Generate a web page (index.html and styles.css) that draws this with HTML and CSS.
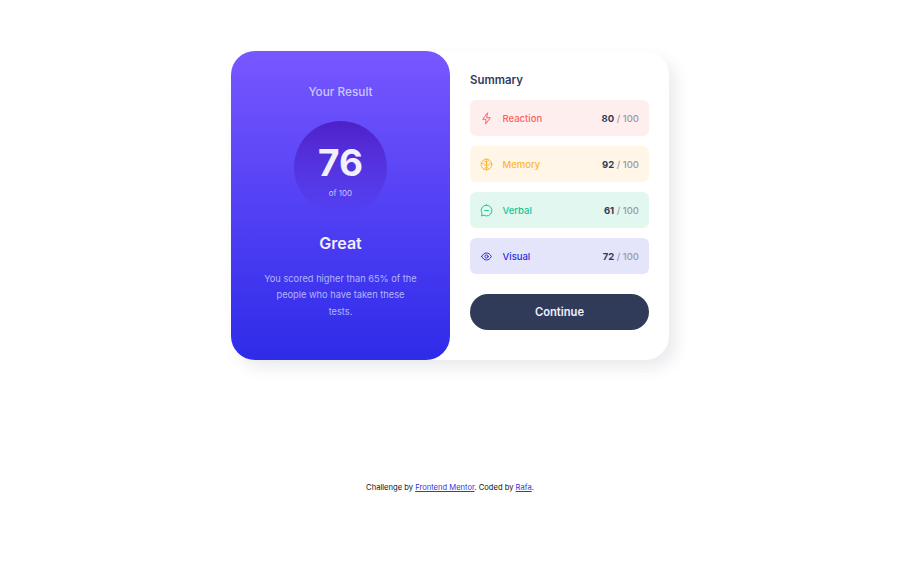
FILE: index.html
```html
<!DOCTYPE html>
<html lang="en">
<head>
<meta charset="utf-8">
<title>Results summary</title>
<link rel="stylesheet" href="styles.css">
</head>
<body>
<main class="card">
  <section class="result">
    <h1 class="result-title">Your Result</h1>
    <div class="score">
      <span class="score-value">76</span>
      <span class="score-total">of 100</span>
    </div>
    <h2 class="grade">Great</h2>
    <p class="blurb">You scored higher than 65% of the people who have taken these<br>tests.</p>
  </section>
  <section class="summary">
    <h2 class="summary-title">Summary</h2>
    <ul class="rows">
      <li class="row row-reaction">
        <svg class="icon" viewBox="0 0 24 24" fill="none" stroke="currentColor" stroke-width="1.8" stroke-linejoin="round" stroke-linecap="round"><path d="M13.500 2 5 13.500h6L10.500 22 19 10.500h-6z"/></svg>
        <span class="label">Reaction</span>
        <span class="value"><b>80</b> / 100</span>
      </li>
      <li class="row row-memory">
        <svg class="icon" viewBox="0 0 24 24" fill="none" stroke="currentColor" stroke-width="1.8" stroke-linejoin="round" stroke-linecap="round"><circle cx="12" cy="12" r="10"/><path d="M12 2v20M12 8c-2 0-3-1-3.500-2.500M12 8c2 0 3-1 3.500-2.500M12 13H7.500M12 13h4.500M2.500 10H6M21.500 10H18M12 17c-2 0-3 1-3.500 3M12 17c2 0 3 1 3.500 3"/></svg>
        <span class="label">Memory</span>
        <span class="value"><b>92</b> / 100</span>
      </li>
      <li class="row row-verbal">
        <svg class="icon" viewBox="0 0 24 24" fill="none" stroke="currentColor" stroke-width="1.8" stroke-linejoin="round" stroke-linecap="round"><path d="M12 2a10 10 0 1 1-4.800 18.800L2.500 22l1.300-4.500A10 10 0 0 1 12 2z"/><path d="M8.500 12h7"/></svg>
        <span class="label">Verbal</span>
        <span class="value"><b>61</b> / 100</span>
      </li>
      <li class="row row-visual">
        <svg class="icon" viewBox="0 0 24 24" fill="none" stroke="currentColor" stroke-width="1.8" stroke-linejoin="round" stroke-linecap="round"><path d="M3 12c2.300-4 5.300-6.500 9-6.500s6.700 2.500 9 6.500c-2.300 4-5.300 6.500-9 6.500S5.300 16 3 12z"/><circle cx="12" cy="12" r="3"/></svg>
        <span class="label">Visual</span>
        <span class="value"><b>72</b> / 100</span>
      </li>
    </ul>
    <button class="continue" type="button">Continue</button>
  </section>
</main>
<footer class="attribution">Challenge by <a href="#">Frontend Mentor</a>. Coded by <a href="#">Rafa</a>.</footer>
</body>
</html>
```
FILE: styles.css
```css
* { box-sizing: border-box; }
html, body { margin: 0; padding: 0; }
body {
  width: 900px;
  height: 563px;
  overflow: hidden;
  background: #fff;
  font-family: "Inter", "Liberation Sans", sans-serif;
  display: flex;
  flex-direction: column;
  align-items: center;
}
.card {
  display: flex;
  width: 438px;
  height: 309px;
  margin-top: 51px;
  background: #fff;
  border-radius: 24px;
  box-shadow: 7px 8px 15px rgba(48, 60, 89, 0.1);
}
.result {
  width: 219px;
  border-radius: 24px;
  background: linear-gradient(180deg, #7857ff 0%, #2e2be9 100%);
  display: flex;
  flex-direction: column;
  align-items: center;
  padding-top: 33px;
  color: #fff;
}
.result-title {
  margin: 0;
  font-size: 11.800px;
  line-height: 16px;
  font-weight: 500;
  color: #c8c7ff;
}
.score {
  width: 93px;
  height: 93px;
  margin-top: 21px;
  border-radius: 50%;
  background: linear-gradient(180deg, #4d21c9 0%, rgba(37, 33, 201, 0) 100%);
  display: flex;
  flex-direction: column;
  align-items: center;
  padding-top: 20px;
}
.score-value {
  font-size: 37px;
  line-height: 44px;
  font-weight: 700;
  color: #f0f0ff;
}
.score-total {
  font-size: 8px;
  line-height: 12px;
  margin-top: 2px;
  color: #c8c7ff;
}
.grade {
  margin: 20px 0 0;
  font-size: 16px;
  line-height: 18px;
  font-weight: 600;
  color: #f0f0ff;
}
.blurb {
  width: 156px;
  margin: 19px 0 0;
  font-size: 9.250px;
  line-height: 16.300px;
  text-align: center;
  color: #b5b4ff;
}
.summary {
  width: 219px;
  padding: 21px 20px 0 20px;
  display: flex;
  flex-direction: column;
}
.summary-title {
  margin: 0;
  font-size: 11.400px;
  line-height: 16px;
  font-weight: 600;
  color: #303b5a;
}
.rows {
  list-style: none;
  margin: 12px 0 0;
  padding: 0;
  display: flex;
  flex-direction: column;
  gap: 10px;
}
.row {
  height: 36px;
  border-radius: 6px;
  display: flex;
  align-items: center;
  padding: 0 10px;
  font-size: 9.500px;
  font-weight: 500;
}
.icon { width: 13px; height: 13px; flex: none; margin-right: 9.500px; }
.label { flex: 1; }
.value { color: #9a9aa6; }
.value b { color: #303b5a; font-weight: 700; }
.row-reaction { background: #ffeeee; color: #ff6161; }
.row-memory { background: #fff6e8; color: #ffb630; }
.row-verbal { background: #e3f7f1; color: #10c795; }
.row-visual { background: #e4e5fa; color: #2a2be0; }
.continue {
  height: 36px;
  margin-top: 20px;
  border: 0;
  border-radius: 18px;
  background: #303b5a;
  color: #f0f0ff;
  font: 600 11.200px/16px "Inter", "Liberation Sans", sans-serif;
}
.attribution {
  margin-top: 122px;
  font-size: 7.600px;
  line-height: 12px;
  color: #111;
}
.attribution a { color: #3a33d8; }
```
